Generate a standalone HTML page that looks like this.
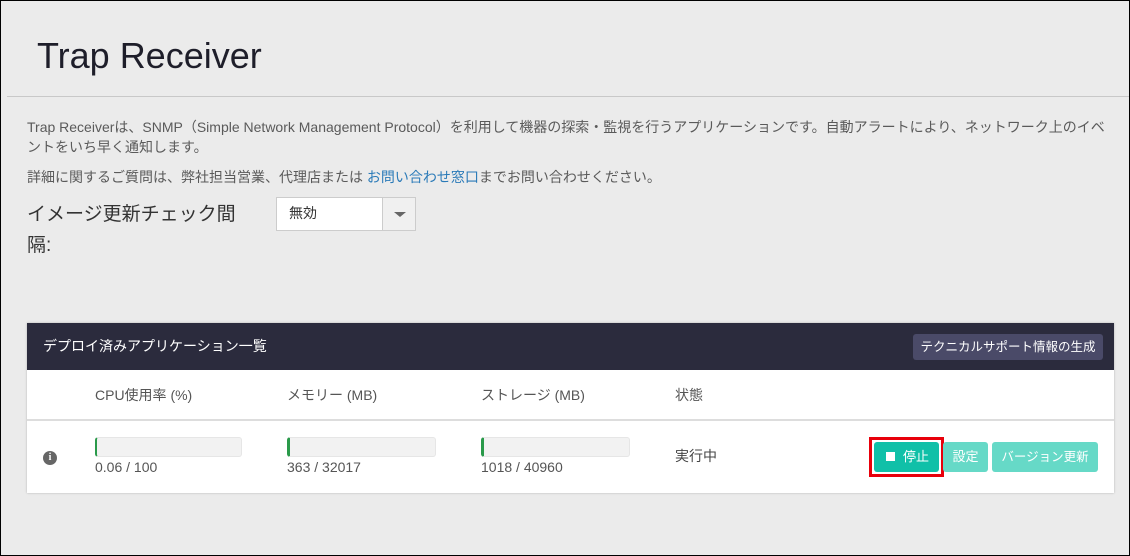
<!DOCTYPE html>
<html><head><meta charset="utf-8"><style>
*{box-sizing:border-box;margin:0;padding:0}
body{width:1130px;height:556px;background:#ebebeb;font-family:"Liberation Sans","Noto Sans CJK JP",sans-serif;color:#555;position:relative;overflow:hidden}
.a{position:absolute;white-space:nowrap}
</style></head><body>
<div class="a" style="left:0;top:0;width:1130px;height:556px;border:1px solid #000;z-index:5"></div>
<div class="a" style="left:37px;top:34px;font-size:36px;color:#1e1e2a;line-height:44px">Trap Receiver</div>
<div class="a" style="left:7px;top:96px;width:1123px;height:1px;background:#c8c8c8"></div>
<div class="a" style="left:27px;top:117px;font-size:14px;line-height:20px;color:#5a5a5a">Trap Receiverは、SNMP（Simple Network Management Protocol）を利用して機器の探索・監視を行うアプリケーションです。自動アラートにより、ネットワーク上のイベ<br>ントをいち早く通知します。</div>
<div class="a" style="left:27px;top:167px;font-size:14px;line-height:20px;color:#5a5a5a">詳細に関するご質問は、弊社担当営業、代理店または <span style="color:#2a7ab8">お問い合わせ窓口</span>までお問い合わせください。</div>
<div class="a" style="left:27px;top:199px;font-size:19px;line-height:31px;color:#333">イメージ更新チェック間<br>隔:</div>
<div class="a" style="left:276px;top:197px;width:140px;height:34px;background:#fff;border:1px solid #ccc"></div>
<div class="a" style="left:382px;top:198px;width:33px;height:32px;background:#f0f0f0;border-left:1px solid #ccc"></div>
<div class="a" style="left:394px;top:212px;border-left:6px solid transparent;border-right:6px solid transparent;border-top:5px solid #666"></div>
<div class="a" style="left:289px;top:203px;font-size:14px;line-height:20px;color:#333">無効</div>

<div class="a" style="left:27px;top:323px;width:1087px;height:170px;background:#fff;box-shadow:0 0 2px rgba(0,0,0,.25)"></div>
<div class="a" style="left:27px;top:323px;width:1087px;height:47px;background:#2b2b3d"></div>
<div class="a" style="left:43px;top:336px;font-size:14px;line-height:20px;color:#fff">デプロイ済みアプリケーション一覧</div>
<div class="a" style="left:913px;top:334px;width:190px;height:26px;background:#4a4a68;border-radius:3px;color:#fff;font-size:12.5px;line-height:26px;text-align:center">テクニカルサポート情報の生成</div>
<div class="a" style="left:95px;top:385px;font-size:14px;line-height:20px">CPU使用率 (%)</div>
<div class="a" style="left:287px;top:385px;font-size:14px;line-height:20px">メモリー (MB)</div>
<div class="a" style="left:481px;top:385px;font-size:14px;line-height:20px">ストレージ (MB)</div>
<div class="a" style="left:675px;top:385px;font-size:14px;line-height:20px">状態</div>
<div class="a" style="left:27px;top:419px;width:1087px;height:2px;background:#ddd"></div>
<div class="a" style="left:43px;top:451px;width:14px;height:14px;border-radius:50%;background:#666;color:#fff;font-size:10px;font-weight:bold;line-height:14px;text-align:center;font-family:'Liberation Serif',serif">i</div>
<div class="a" style="left:95px;top:437px;width:147px;height:20px;background:#f2f2f2;border:1px solid #e6e6e6;border-radius:3px;border-left:2px solid #2a9a4a"></div>
<div class="a" style="left:287px;top:437px;width:149px;height:20px;background:#f2f2f2;border:1px solid #e6e6e6;border-radius:3px;border-left:3px solid #2a9a4a"></div>
<div class="a" style="left:481px;top:437px;width:149px;height:20px;background:#f2f2f2;border:1px solid #e6e6e6;border-radius:3px;border-left:3px solid #2a9a4a"></div>
<div class="a" style="left:95px;top:457px;font-size:14px;line-height:20px">0.06 / 100</div>
<div class="a" style="left:287px;top:457px;font-size:14px;line-height:20px">363 / 32017</div>
<div class="a" style="left:481px;top:457px;font-size:14px;line-height:20px">1018 / 40960</div>
<div class="a" style="left:675px;top:446px;font-size:14px;line-height:20px;color:#444">実行中</div>
<div class="a" style="left:869px;top:437px;width:75px;height:40px;border:3px solid #e8000b"></div>
<div class="a" style="left:874px;top:442px;width:65px;height:30px;background:#10c0a8;border-radius:3px;color:#fff;font-size:13px;line-height:30px"><span style="display:inline-block;width:9px;height:9px;background:#fff;margin:0 8px 0 12px"></span>停止</div>
<div class="a" style="left:943px;top:442px;width:45px;height:30px;background:#66d9c7;border-radius:3px;color:#fff;font-size:13px;line-height:30px;text-align:center">設定</div>
<div class="a" style="left:992px;top:442px;width:106px;height:30px;background:#66d9c7;border-radius:3px;color:#fff;font-size:12.5px;line-height:30px;text-align:center">バージョン更新</div>
</body></html>
